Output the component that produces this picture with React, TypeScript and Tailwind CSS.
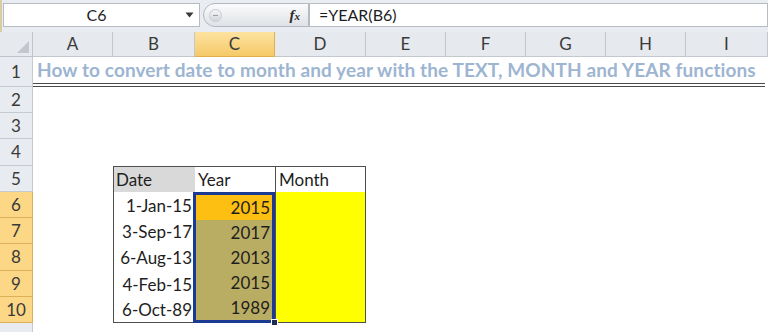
import React from 'react';

const colDefs: { label: string; selected?: boolean }[] = [
  { label: 'A' },
  { label: 'B' },
  { label: 'C', selected: true },
  { label: 'D' },
  { label: 'E' },
  { label: 'F' },
  { label: 'G' },
  { label: 'H' },
  { label: 'I' },
];

const rowDefs = [1, 2, 3, 4, 5, 6, 7, 8, 9, 10];

const data = [
  { date: '1-Jan-15', year: '2015' },
  { date: '3-Sep-17', year: '2017' },
  { date: '6-Aug-13', year: '2013' },
  { date: '4-Feb-15', year: '2015' },
  { date: '6-Oct-89', year: '1989' },
];

const bodyHeights = ['h-[26px]', 'h-[26px]', 'h-[27px]', 'h-[26px]', 'h-[25px]'];

export default function App() {
  return (
    <div className="w-[768px] h-[332px] overflow-hidden bg-white font-['Lato','Carlito','Liberation_Sans',sans-serif] text-[#1e1e1e]">
      {/* Formula bar */}
      <div className="h-[32px] flex items-start bg-[#e9ecf0] border-l-2 border-[#d6cda4] pt-[3px]">
        <div className="ml-[1px] h-[24px] w-[197px] flex items-center bg-white border border-[#b6bcc4]">
          <div className="flex-1 text-center text-[16px] leading-none pl-[4px]">C6</div>
          <svg width="9" height="6" viewBox="0 0 9 6" className="mr-[5px]">
            <polygon points="0.5,0.5 8.5,0.5 4.5,5.5" fill="#3a3a3a" />
          </svg>
        </div>
        <div className="ml-[3px] h-[24px] w-[106px] flex items-center rounded-l-full border border-[#b3b8c0] bg-linear-to-b from-[#fafbfc] to-[#dfe2e6]">
          <div className="ml-[5px] w-[13px] h-[13px] rounded-full bg-linear-to-b from-[#f4f5f7] to-[#d3d6da] border border-[#c7cbd1] flex items-center justify-center">
            <div className="w-[5px] h-[1px] bg-[#9aa0a8]" />
          </div>
          <div className="flex-1" />
          <span className="mr-[8px] font-['Liberation_Serif',serif] italic font-bold text-[15px] leading-none text-[#2a2a2a]">
            f<span className="text-[11px]">x</span>
          </span>
        </div>
        <div className="flex-1 h-[24px] flex items-center bg-white border border-[#b6bcc4] pl-[9px] text-[16px] leading-none">
          =YEAR(B6)
        </div>
      </div>

      {/* Sheet grid */}
      <div className="grid grid-cols-[33px_80px_82px_80px_91px_80px_80px_80px_80px_82px] grid-rows-[25px_30px_26px_26px_27px_26px_26px_26px_27px_26px_26px_9px]">
        {/* Corner */}
        <div className="col-start-1 row-start-1 bg-[#e6e9ee] border-r border-b border-[#bfc4cb] flex items-end justify-end p-[3px]">
          <svg width="12" height="12" viewBox="0 0 12 12">
            <polygon points="12,0 12,12 0,12" fill="#c3c7cd" />
          </svg>
        </div>
        {colDefs.map((c, i) =>
          c.selected ? (
            <div
              key={i}
              className="row-start-1 bg-linear-to-b from-[#fde3a0] to-[#f5c967] border-r border-b border-[#e1ae4a] flex items-center justify-center text-[17px] text-[#3a3a3a]"
            >
              {c.label}
            </div>
          ) : (
            <div
              key={i}
              className="row-start-1 bg-[#e6e9ee] border-r border-b border-[#c3c8cf] flex items-center justify-center text-[17px] text-[#3a3a3a]"
            >
              {c.label}
            </div>
          )
        )}

        {/* Row headers */}
        {rowDefs.map((r) => {
          const sel = r >= 6 && r <= 10;
          return (
            <div
              key={r}
              className={
                sel
                  ? 'col-start-1 bg-[#fbd786] border-r border-b border-[#dcb05a] flex items-center justify-center text-[17px] text-[#3a3a3a]'
                  : 'col-start-1 bg-[#e8ebef] border-r border-b border-[#c5cad1] flex items-center justify-center text-[17px] text-[#3a3a3a]'
              }
              style={{ gridRowStart: r + 1 }}
            >
              {r}
            </div>
          );
        })}
        <div className="col-start-1 row-start-12 bg-[#e8ebef] border-r border-[#c5cad1]" />

        {/* Title row */}
        <div className="col-start-2 col-end-11 row-start-2 mr-[3px] border-b-[4px] border-double border-[#4a4a4a] flex items-center pl-[4px] whitespace-nowrap font-bold text-[19px] tracking-[0.1px] text-[#9db5d1]">
          How to convert date to month and year with the TEXT, MONTH and YEAR functions
        </div>

        {/* Data table B5:D10 */}
        <div className="col-start-3 col-end-6 row-start-6 row-end-12 flex border border-[#4f4f4f] text-[17px] leading-none">
          {/* Date column */}
          <div className="w-[81px] flex flex-col">
            <div className="h-[25px] bg-[#d9d9d9] flex items-center pl-[2px]">Date</div>
            {data.map((d, i) => (
              <div key={i} className={`${bodyHeights[i]} flex items-center justify-end pr-[3px]`}>
                {d.date}
              </div>
            ))}
          </div>
          {/* Year column */}
          <div className="w-[80px] flex flex-col">
            <div className="h-[25px] bg-white flex items-center pl-[3px]">Year</div>
            <div className="relative flex-1 flex flex-col border-[3px] border-[#1a3a94] -ml-[2px] -mb-[1px] mr-[0px]">
              {data.map((d, i) => (
                <div
                  key={i}
                  className={`flex-1 flex items-center justify-end pr-[2px] ${i === 0 ? 'bg-[#fcbf12]' : 'bg-[#b9ad63]'}`}
                >
                  {d.year}
                </div>
              ))}
              <div className="absolute -right-[6px] -bottom-[6px] w-[7px] h-[7px] bg-[#1d2b55] border border-white" />
            </div>
          </div>
          {/* Month column */}
          <div className="flex-1 flex flex-col border-l border-[#4f4f4f]">
            <div className="h-[25px] bg-white flex items-center pl-[3px]">Month</div>
            <div className="flex-1 bg-[#ffff00]" />
          </div>
        </div>
      </div>
    </div>
  );
}
